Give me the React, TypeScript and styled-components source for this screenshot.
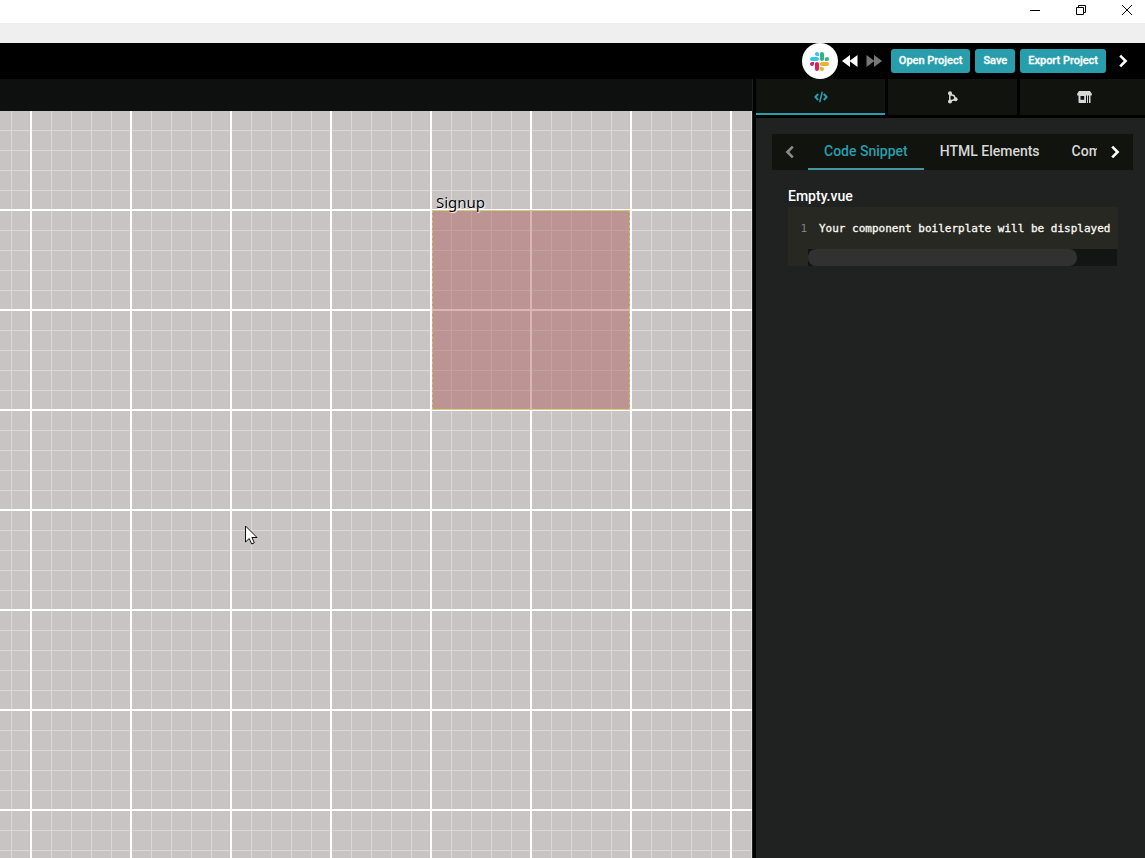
import React from "react";
import styled, { createGlobalStyle } from "styled-components";

const GlobalStyle = createGlobalStyle`
  * { box-sizing: border-box; }
  body {
    margin: 0;
    background: #000;
    font-family: Roboto, "Liberation Sans", sans-serif;
    overflow: hidden;
  }
  button { font: inherit; color: inherit; border: 0; margin: 0; padding: 0; background: none; }
  svg { display: block; }
`;

const Shell = styled.div`
  display: flex;
  flex-direction: column;
  height: 100vh;
`;

const TitleBar = styled.div`
  display: flex;
  justify-content: flex-end;
  gap: 10px;
  height: 23px;
  flex: none;
  background: #fff;
`;

const WindowButton = styled.button`
  display: flex;
  justify-content: center;
  width: 36px;
  padding-top: 4px;
`;

const MenuStrip = styled.div`
  height: 20px;
  flex: none;
  background: #efefef;
`;

const Toolbar = styled.header`
  display: flex;
  align-items: center;
  justify-content: flex-end;
  height: 36px;
  flex: none;
  padding-right: 14px;
  background: #000;
  color: #fff;
`;

const SlackButton = styled.button`
  display: grid;
  place-items: center;
  width: 36px;
  height: 36px;
  border-radius: 50%;
  background: #fff;
`;

const HistoryButton = styled.button<{ $dim?: boolean }>`
  display: grid;
  place-items: center;
  width: 24px;
  height: 24px;
  color: ${(p) => (p.$dim ? "#777" : "#fff")};
`;

const Actions = styled.div`
  display: flex;
  gap: 5px;
  margin: 0 9px 0 5px;
`;

const ActionButton = styled.button`
  height: 24px;
  padding: 0 8px;
  border-radius: 3px;
  background: #289ead;
  font-size: 11px;
  font-weight: 500;
  line-height: 22px;
  white-space: nowrap;
  -webkit-text-stroke: 0.3px #fff;
`;

const IconButton = styled.button<{ $dim?: boolean }>`
  display: grid;
  place-items: center;
  flex: none;
  width: 16px;
  height: 24px;
  color: ${(p) => (p.$dim ? "#8c8c8a" : "#fff")};
`;

const Workspace = styled.div`
  display: grid;
  grid-template-columns: minmax(0, 1fr) 389px;
  column-gap: 3px;
  flex: 1;
  min-height: 0;
`;

const Stage = styled.main`
  display: flex;
  flex-direction: column;
  border-right: 1px solid #202221;
`;

const StageHeader = styled.div`
  height: 32px;
  flex: none;
  background: #0d100f;
`;

const Canvas = styled.div`
  position: relative;
  flex: 1;
  overflow: hidden;
  background-color: #c8c4c3;
  background-image:
    linear-gradient(#fff 2px, transparent 2px),
    linear-gradient(90deg, #fff 2px, transparent 2px),
    linear-gradient(#dbd8d7 1px, transparent 1px),
    linear-gradient(90deg, #dbd8d7 1px, transparent 1px);
  background-size: 100px 100px, 100px 100px, 20px 20px, 20px 20px;
  background-position: 0 98px, 30px 0, 0 19px, 11px 0;
`;

const ComponentBox = styled.div`
  position: absolute;
  left: 432px;
  top: 99px;
  width: 198px;
  height: 200px;
  border: 1px dashed #d8bd62;
  border-top: 1px solid #dccb7c;
  border-bottom: 1px solid #dccb7c;
  background: rgba(174, 92, 91, 0.45);
`;

const ComponentName = styled.span`
  position: absolute;
  left: 3px;
  bottom: 100%;
  font-family: "Noto Sans", sans-serif;
  font-size: 15px;
  line-height: 18px;
  color: #000;
  text-shadow: 0 0 1px #fff, 1px 1px 1px #fff;
`;

const Pointer = styled.svg`
  position: absolute;
  left: 245px;
  top: 414px;
`;

const Sidebar = styled.aside`
  display: flex;
  flex-direction: column;
  min-width: 0;
  overflow: hidden;
`;

const PanelTabs = styled.nav`
  display: grid;
  grid-template-columns: repeat(3, 1fr);
  gap: 3px;
  height: 36px;
  flex: none;
  margin: 0 -4px 3px 0;
`;

const PanelTab = styled.button<{ $active?: boolean }>`
  display: grid;
  place-items: center;
  background: #11130f;
  color: ${(p) => (p.$active ? "#289ead" : "#d8d8d6")};
  box-shadow: ${(p) => (p.$active ? "inset 0 -2px #289ead" : "none")};
`;

const Panel = styled.section`
  flex: 1;
  padding: 16px 12px 0 16px;
  background: #202221;
`;

const SnippetTabs = styled.div`
  display: flex;
  align-items: center;
  height: 36px;
  padding: 0 10px;
  background: #11130f;
`;

const TabScroller = styled.div`
  display: flex;
  flex: 1;
  height: 36px;
  margin: 0 10px;
  min-width: 0;
  overflow: hidden;
`;

const SnippetTab = styled.button<{ $active?: boolean }>`
  flex: none;
  height: 36px;
  padding: 0 16px 2px;
  font-size: 14px;
  font-weight: 500;
  line-height: 34px;
  color: ${(p) => (p.$active ? "#289ead" : "#d8d8d6")};
  box-shadow: ${(p) => (p.$active ? "inset 0 -2px #4596a0" : "none")};
`;

const Snippet = styled.div`
  padding: 16px 15px 0 16px;
`;

const FileName = styled.h2`
  margin: 0;
  font-size: 14px;
  font-weight: 500;
  line-height: 21px;
  color: #fff;
`;

const Editor = styled.div`
  display: grid;
  grid-template-columns: 20px minmax(0, 1fr);
  grid-template-rows: 42px 17px;
  font-family: "DejaVu Sans Mono", "Liberation Mono", monospace;
  font-size: 11px;
  line-height: 44px;
`;

const LineNumber = styled.span`
  padding-right: 1px;
  text-align: right;
  background: #272822;
  color: #7f8280;
`;

const Code = styled.code`
  padding-left: 11px;
  overflow: hidden;
  white-space: pre;
  font-family: inherit;
  background: #272822;
  color: #fafaf4;
  -webkit-text-stroke: 0.3px #fafaf4;
`;

const Gutter = styled.div`
  background: #272822;
`;

const ScrollTrack = styled.div`
  margin-right: 1px;
  background: #131514;
`;

const ScrollThumb = styled.div`
  width: 87%;
  height: 17px;
  border-radius: 8px;
  background: #303130;
`;

const Chevron = ({ left }: { left?: boolean }) => (
  <svg width="16" height="16" viewBox="0 0 16 16" fill="none" stroke="currentColor" strokeWidth="2.6">
    <path d={left ? "M10.8 2.600L5.400 8l5.400 5.400" : "M5.200 2.600L10.600 8l-5.400 5.400"} />
  </svg>
);

const SlackMark = () => (
  <svg width="19" height="19" viewBox="0 0 122.8 122.8">
    <path fill="#e01e5a" d="M25.8 77.6c0 7.1-5.8 12.9-12.9 12.9S0 84.7 0 77.6s5.8-12.9 12.9-12.9h12.9zm6.5 0c0-7.1 5.8-12.9 12.9-12.9s12.9 5.8 12.9 12.9v32.3c0 7.1-5.8 12.9-12.9 12.9s-12.9-5.8-12.9-12.9z" />
    <path fill="#36c5f0" d="M45.2 25.8c-7.1 0-12.9-5.8-12.9-12.9S38.1 0 45.2 0s12.9 5.8 12.9 12.9v12.9zm0 6.5c7.1 0 12.9 5.8 12.9 12.9s-5.8 12.9-12.9 12.9H12.9C5.8 58.1 0 52.3 0 45.2s5.8-12.9 12.9-12.9z" />
    <path fill="#2eb67d" d="M97 45.2c0-7.1 5.8-12.9 12.9-12.9s12.9 5.8 12.9 12.9-5.8 12.9-12.9 12.9H97zm-6.5 0c0 7.1-5.8 12.9-12.9 12.9s-12.9-5.8-12.9-12.9V12.9C64.7 5.8 70.5 0 77.6 0s12.9 5.8 12.9 12.9z" />
    <path fill="#ecb22e" d="M77.6 97c7.1 0 12.9 5.8 12.9 12.9s-5.8 12.9-12.9 12.9-12.9-5.8-12.9-12.9V97zm0-6.5c-7.1 0-12.9-5.8-12.9-12.9s5.8-12.9 12.9-12.9h32.3c7.1 0 12.9 5.8 12.9 12.9s-5.8 12.9-12.9 12.9z" />
  </svg>
);

export default function App() {
  return (
    <Shell>
      <GlobalStyle />
      <TitleBar>
        <WindowButton aria-label="Minimize">
          <svg width="12" height="12" viewBox="0 0 12 12"><path d="M1 6.5h10" stroke="#000" /></svg>
        </WindowButton>
        <WindowButton aria-label="Restore">
          <svg width="12" height="12" viewBox="0 0 12 12" fill="none" stroke="#000"><path d="M1.500 3.500h7v7h-7zM3.500 3.500v-2h7v7h-2" /></svg>
        </WindowButton>
        <WindowButton aria-label="Close">
          <svg width="12" height="12" viewBox="0 0 12 12" stroke="#000"><path d="M1 1l10 10M11 1L1 11" /></svg>
        </WindowButton>
      </TitleBar>
      <MenuStrip />
      <Toolbar>
        <SlackButton aria-label="Slack"><SlackMark /></SlackButton>
        <HistoryButton aria-label="Undo">
          <svg width="16" height="12" viewBox="0 0 16 12" fill="currentColor"><path d="M8 0v12L0 6zM15.500 0v12L7.500 6z" /></svg>
        </HistoryButton>
        <HistoryButton aria-label="Redo" $dim>
          <svg width="16" height="12" viewBox="0 0 16 12" fill="currentColor"><path d="M.5 0v12l8-6zM8 0v12l8-6z" /></svg>
        </HistoryButton>
        <Actions>
          <ActionButton>Open Project</ActionButton>
          <ActionButton>Save</ActionButton>
          <ActionButton>Export Project</ActionButton>
        </Actions>
        <IconButton aria-label="Collapse sidebar"><Chevron /></IconButton>
      </Toolbar>
      <Workspace>
        <Stage>
          <StageHeader />
          <Canvas>
            <ComponentBox><ComponentName>Signup</ComponentName></ComponentBox>
            <Pointer width="13" height="20" viewBox="0 0 13 20">
              <path d="M.5 1v16l3.700-3.500 2.500 5.500 2.600-1.200L6.900 12.500H12z" fill="#fff" stroke="#111" />
            </Pointer>
          </Canvas>
        </Stage>
        <Sidebar>
          <PanelTabs>
            <PanelTab $active aria-label="Code">
              <svg width="14" height="12" viewBox="0 0 14 12" fill="none" stroke="currentColor" strokeWidth="2">
                <path d="M4.200 3L1.400 6l2.800 3M9.800 3l2.800 3-2.800 3" />
                <path d="M8.300 .8L5.700 11.200" strokeWidth="1.500" />
              </svg>
            </PanelTab>
            <PanelTab aria-label="Component tree">
              <svg width="12" height="14" viewBox="0 0 12 14" fill="currentColor">
                <circle cx="3" cy="3.200" r="2" /><circle cx="3" cy="11.400" r="2" /><circle cx="8.600" cy="9.200" r="2" />
                <path d="M2.800 3v8M3 4.200l4 1.500 1.500 3M3 11l5.500-1.500" fill="none" stroke="currentColor" strokeWidth="1.500" />
              </svg>
            </PanelTab>
            <PanelTab aria-label="Store">
              <svg width="15" height="12" viewBox="0 0 15 12" fill="currentColor">
                <path d="M2 0h11l1.800 2.800V4.500H.2V2.800z" />
                <path fillRule="evenodd" d="M1.500 4h7.500v8H2.500q-1 0-1-1zM3.500 5v3.800h3.700V5z" />
                <path d="M10 4h1v8h-1zM12 4h1.500v8H12z" />
              </svg>
            </PanelTab>
          </PanelTabs>
          <Panel>
            <SnippetTabs>
              <IconButton aria-label="Previous tabs" $dim><Chevron left /></IconButton>
              <TabScroller>
                <SnippetTab $active>Code Snippet</SnippetTab>
                <SnippetTab>HTML Elements</SnippetTab>
                <SnippetTab>Component State</SnippetTab>
              </TabScroller>
              <IconButton aria-label="Next tabs"><Chevron /></IconButton>
            </SnippetTabs>
            <Snippet>
              <FileName>Empty.vue</FileName>
              <Editor>
                <LineNumber>1</LineNumber>
                <Code>Your component boilerplate will be displayed</Code>
                <Gutter />
                <ScrollTrack><ScrollThumb /></ScrollTrack>
              </Editor>
            </Snippet>
          </Panel>
        </Sidebar>
      </Workspace>
    </Shell>
  );
}
